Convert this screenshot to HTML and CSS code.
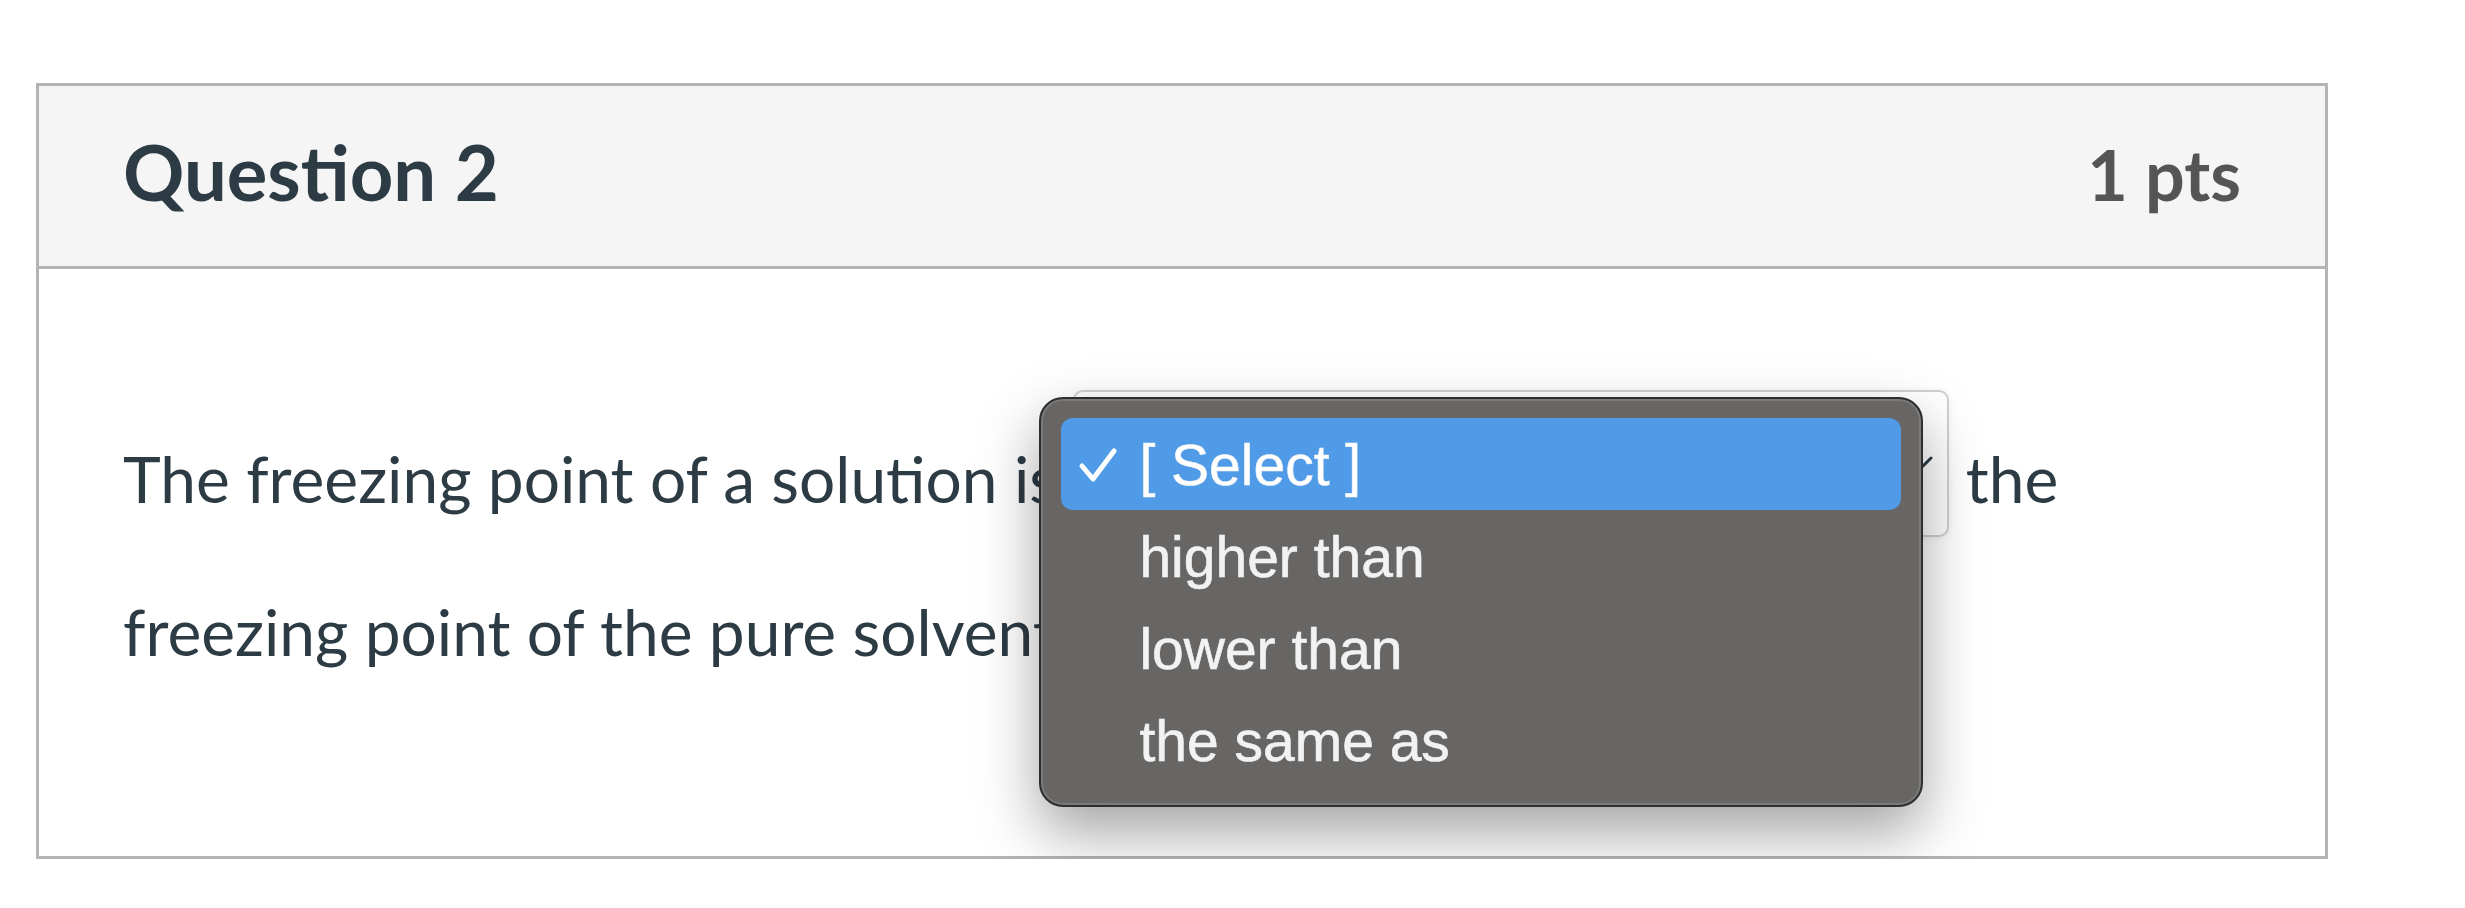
FILE: index.html
```html
<!DOCTYPE html>
<html lang="en">
<head>
    <meta charset="UTF-8">
    <title>Question 2</title>
    <link rel="stylesheet" href="styles.css">
</head>
<body>
    <div class="page">
        <div class="question">
            <div class="question-header">
                <h2 class="question-name">Question 2</h2>
                <span class="question-points">1 pts</span>
            </div>
            <div class="question-body">
                <div class="question-text">
                    The freezing point of a solution is
                    <span class="select-wrap">
                        <span class="select-box">
                            <span class="select-value">[ Select ]</span>
                            <svg class="chevron" width="28" height="16" viewBox="0 0 28 16">
                                <polyline points="2,2 14,14 26,2" fill="none" stroke="#2d3b45" stroke-width="3" stroke-linecap="round" stroke-linejoin="round"/>
                            </svg>
                        </span>
                        <span class="select-menu">
                            <span class="option selected">
                                <span class="check">
                                    <svg width="40" height="36" viewBox="0 0 40 36">
                                        <polyline points="4,19 15,32 36,4" fill="none" stroke="#fff" stroke-width="5" stroke-linecap="round" stroke-linejoin="round"/>
                                    </svg>
                                </span>
                                [ Select ]
                            </span>
                            <span class="option"><span class="check"></span>higher than</span>
                            <span class="option"><span class="check"></span>lower than</span>
                            <span class="option"><span class="check"></span>the same as</span>
                        </span>
                    </span>
                    the<br>
                    freezing point of the pure solvent.
                </div>
            </div>
        </div>
    </div>
</body>
</html>
```

FILE: styles.css
```css
* {
    box-sizing: border-box;
}
body {
    margin: 0;
    background: #fff;
    font-family: Lato, "Noto Sans", sans-serif;
    color: #2d3b45;
}
.page {
    padding: 83px 0 0 36px;
}
.question {
    width: 2292px;
    border: 3px solid #b4b4b4;
}
.question-header {
    display: flex;
    justify-content: space-between;
    align-items: baseline;
    height: 183px;
    padding: 40px 84px 0 84px;
    background: #f5f5f5;
    border-bottom: 3px solid #b4b4b4;
}
.question-name {
    margin: 0;
    font-size: 76px;
    font-weight: 700;
    line-height: normal;
}
.question-points {
    font-size: 70px;
    font-weight: 700;
    color: #555;
}
.question-body {
    height: 587px;
    padding: 133px 84px 0 84px;
    background: #fff;
}
.question-text {
    font-size: 64px;
    line-height: 153px;
}
.select-wrap {
    position: relative;
    display: inline-block;
    vertical-align: top;
    width: 876px;
    height: 147px;
    margin: -12px 0 0 0;
}
.select-box {
    display: flex;
    justify-content: space-between;
    align-items: center;
    height: 100%;
    padding: 0 14px 0 30px;
    background: #fff;
    border: 2px solid #cdd1d4;
    border-radius: 10px;
    box-shadow: 0 1px 6px rgba(0, 0, 0, 0.06);
    font-size: 56px;
    line-height: 1;
}
.chevron {
    display: block;
}

/* native popup list drawn open over the select */
.select-menu {
    position: absolute;
    left: -34px;
    top: 7px;
    width: 884px;
    padding: 19px 20px;
    background: #676665;
    border: 2px solid #2e2e2e;
    border-radius: 24px;
    box-shadow: inset 0 0 0 2px #7b7a79, 0 26px 60px rgba(0, 0, 0, 0.36);
    font-family: "Liberation Sans", Arial, sans-serif;
    font-size: 57px;
    color: #f2f2f2;
    -webkit-text-stroke: 0.6px #f2f2f2;
}
.option {
    display: flex;
    align-items: center;
    height: 92px;
    border-radius: 12px;
    line-height: 1;
    padding-top: 2px;
}
.option.selected {
    background: #4f9be8;
    color: #fff;
}
.check {
    display: flex;
    align-items: center;
    width: 78px;
    padding-left: 17px;
}
.check svg {
    display: block;
}
```
